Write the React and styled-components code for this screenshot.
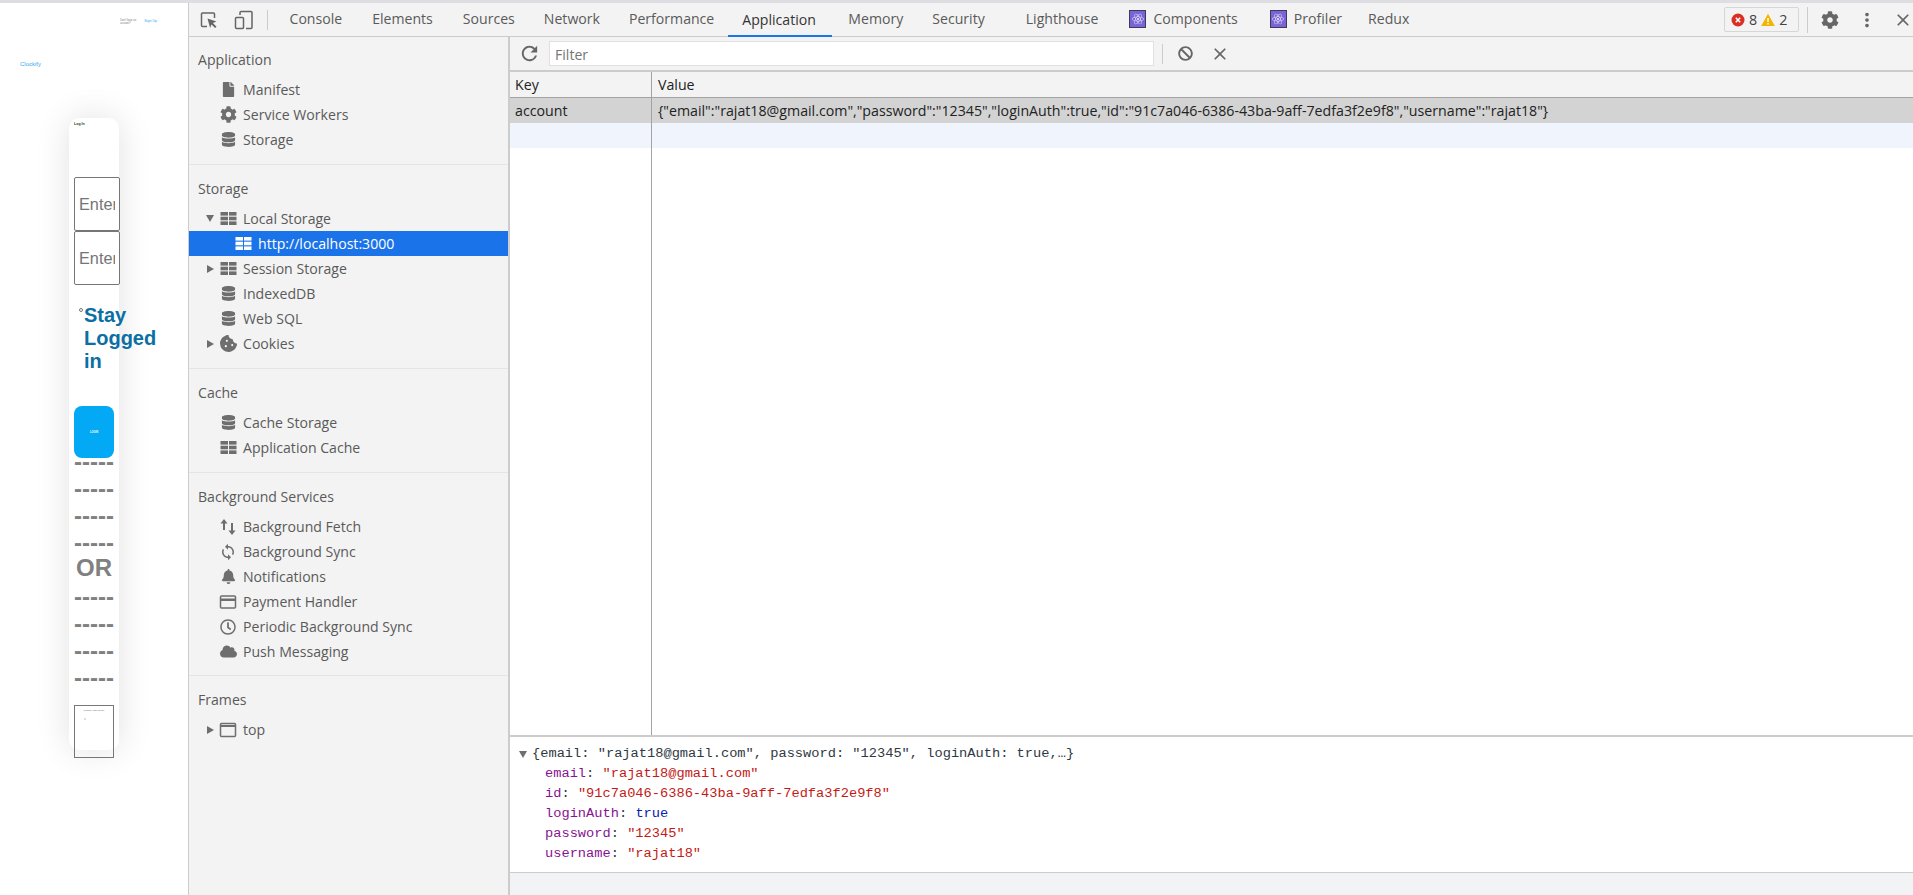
import React from "react";
import styled, { createGlobalStyle } from "styled-components";
import { FaFile, FaCog, FaDatabase, FaCookieBite, FaBell, FaCloud, FaRegClock, FaReact, FaBan } from "react-icons/fa";
import { MdSync, MdRefresh, MdClose, MdMoreVert } from "react-icons/md";

const GlobalStyle = createGlobalStyle`
  * { box-sizing: border-box; }
  html, body { margin: 0; padding: 0; background: #fff; overflow: hidden; }
  body { font-family: "Open Sans", "Noto Sans", sans-serif; }
`;

const Root = styled.div`
  width: 1913px;
  height: 895px;
  display: flex;
  flex-direction: column;
  border-top: 3px solid #dedee2;
`;
const Body = styled.div`
  flex: 1;
  display: flex;
  min-height: 0;
`;

/* the squeezed page on the left */
const PagePane = styled.div`
  width: 189px;
  flex-shrink: 0;
  border-right: 1px solid #ccc;
  background: #fff;
  font-family: "Liberation Sans", Arial, sans-serif;
`;
const PageHeader = styled.div`
  display: flex;
  justify-content: flex-end;
  align-items: flex-start;
  gap: 7px;
  padding: 16px 31px 0 0;
  height: 55px;
`;
const Tiny = styled.span`
  width: 17px;
  font-size: 2.6px;
  line-height: 3px;
  color: #777;
`;
const SignUp = styled.a`
  font-size: 3.6px;
  line-height: 5px;
  color: #3aa9f0;
`;
const Brand = styled.div`
  height: 60px;
  padding: 2px 0 0 20px;
  font-size: 6px;
  line-height: 8px;
  color: #3aa9f0;
`;
const Card = styled.div`
  width: 50px;
  height: 632px;
  margin-left: 69px;
  padding: 4px 5px;
  border-radius: 10px;
  background: #fff;
  box-shadow: 0 0 34px rgba(0, 0, 0, 0.12);
`;
const CardTitle = styled.div`
  height: 55px;
  font-size: 3.6px;
  line-height: 5px;
  font-weight: 700;
  color: #333;
`;
const FieldInput = styled.input`
  display: block;
  width: 46px;
  height: 54px;
  padding: 0 4px;
  border: 1px solid #767676;
  border-radius: 2px;
  outline: none;
  background: #fff;
  font-family: "Liberation Sans", Arial, sans-serif;
  font-size: 16.3px;
  color: #757575;
  &::placeholder { color: #757575; opacity: 1; }
`;
const StayRow = styled.label`
  display: flex;
  align-items: flex-start;
  height: 121px;
  padding: 19px 0 0 5px;
`;
const Radio = styled.span`
  width: 4px;
  height: 4px;
  margin-top: 4px;
  flex-shrink: 0;
  border: 1px solid #767676;
  border-radius: 50%;
`;
const StayText = styled.span`
  width: 62px;
  flex-shrink: 0;
  margin-left: 1px;
  font-size: 20px;
  line-height: 23px;
  font-weight: 700;
  color: #0b6fa4;
`;
const LoginButton = styled.button`
  display: block;
  width: 40px;
  height: 52px;
  padding: 0;
  border: none;
  border-radius: 8px;
  background: #03a9f4;
  color: #fff;
  font-family: "Liberation Sans", Arial, sans-serif;
  font-size: 2.6px;
  font-weight: 700;
`;
const Divider = styled.div`
  width: 40px;
  margin-top: -10px;
  font-size: 24px;
  line-height: 27px;
  font-weight: 700;
  color: #808080;
  text-align: center;
`;
const DividerLine = styled.div`
  white-space: nowrap;
`;
const OrLine = styled(DividerLine)`
  margin: -2px 0 2px;
`;
const SocialBox = styled.div`
  width: 40px;
  height: 53px;
  margin-top: 14px;
  padding-top: 3px;
  border: 1px solid #777;
  font-size: 2.2px;
  line-height: 2.4px;
  color: #666;
  text-align: center;
`;
const TinyCheck = styled.div`
  width: 2px;
  height: 2px;
  margin: 7px 0 0 9px;
  background: #ddd;
`;

/* devtools */
const DevTools = styled.div`
  flex: 1;
  min-width: 0;
  display: flex;
  flex-direction: column;
  background: #f3f3f3;
  color: #333;
`;
const TopBar = styled.div`
  height: 34px;
  flex-shrink: 0;
  display: flex;
  align-items: center;
  border-bottom: 1px solid #ccc;
  background: #f3f3f3;
`;
const ToolButton = styled.span`
  width: ${(p) => p.$w || 36}px;
  display: flex;
  align-items: center;
  justify-content: center;
  color: #666;
`;
const BarSeparator = styled.span`
  width: 1px;
  height: ${(p) => p.$h || 20}px;
  margin: ${(p) => p.$m || "0 7px"};
  background: #ccc;
`;
const Tab = styled.div`
  margin-left: ${(p) => p.$gap || 0}px;
  padding: 0 ${(p) => (p.$active ? 16 : 14.5)}px 0 14.5px;
  display: flex;
  align-items: center;
  gap: 7px;
  font-size: 14.1px;
  color: ${(p) => (p.$active ? "#333" : "#5a5a5a")};
  border-bottom: 2px solid ${(p) => (p.$active ? "#1a73e8" : "transparent")};
  margin-bottom: ${(p) => (p.$active ? "-1px" : "0")};
  height: ${(p) => (p.$active ? "34px" : "33px")};
`;
const ReactBadge = styled.span`
  width: 17px;
  height: 18px;
  display: flex;
  align-items: center;
  justify-content: center;
  background: #7a63d6;
  border: 1px solid #3c3c55;
  color: #e6e1ff;
  font-size: 12px;
`;
const TopRight = styled.div`
  margin-left: auto;
  display: flex;
  align-items: center;
`;
const IssueBadge = styled.div`
  width: 75px;
  height: 25px;
  padding: 0 6px;
  display: flex;
  align-items: center;
  gap: 4px;
  border: 1px solid #d6d6d6;
  border-radius: 2px;
  font-size: 14.3px;
  color: #444;
`;
const Panels = styled.div`
  flex: 1;
  min-height: 0;
  display: flex;
`;
const Sidebar = styled.div`
  width: 321px;
  flex-shrink: 0;
  border-right: 2px solid #ccc;
  background: #f3f3f3;
`;
const Section = styled.div`
  padding: 10px 0 12px;
  border-bottom: 1px solid #e4e4e4;
  &:first-child { padding-top: 9px; }
  &:nth-child(4) { padding-bottom: 11px; }
  &:last-child { border-bottom: none; }
`;
const SectionTitle = styled.div`
  height: 26px;
  margin-bottom: 5px;
  padding-left: 9px;
  display: flex;
  align-items: center;
  font-size: 14.1px;
  color: #5a5a5a;
`;
const TreeRow = styled.div`
  height: 25px;
  padding-left: ${(p) => (p.$nested ? 45 : 16)}px;
  display: flex;
  align-items: center;
  font-size: 14.1px;
  color: ${(p) => (p.$selected ? "#fff" : "#5a5a5a")};
  background: ${(p) => (p.$selected ? "#1a73e8" : "transparent")};
`;
const ArrowSlot = styled.span`
  width: 13px;
  flex-shrink: 0;
`;
const Arrow = styled.span`
  width: 10px;
  height: 10px;
  margin-right: ${(p) => p.$mr || 0}px;
  flex-shrink: 0;
  display: flex;
  align-items: center;
  justify-content: center;
  color: #6e6e6e;
  &::before {
    content: "";
    border-style: solid;
    border-color: transparent;
    ${(p) =>
      p.$open
        ? "border-width: 7px 4.5px 0; border-top-color: currentColor;"
        : "border-width: 4.5px 0 4.5px 7px; border-left-color: currentColor;"}
  }
`;
const IconSlot = styled.span`
  width: 18px;
  height: 18px;
  margin: 0 6px 0 ${(p) => (p.$nested ? 0 : 1)}px;
  flex-shrink: 0;
  display: flex;
  align-items: center;
  justify-content: center;
  color: ${(p) => (p.$selected ? "#fff" : "#6e6e6e")};
`;
const Main = styled.div`
  flex: 1;
  min-width: 0;
  display: flex;
  flex-direction: column;
  background: #fff;
`;
const FilterBar = styled.div`
  height: 35px;
  flex-shrink: 0;
  display: flex;
  align-items: center;
  padding-left: 8px;
  background: #f3f3f3;
  border-bottom: 2px solid #ccc;
`;
const FilterInput = styled.input`
  width: 605px;
  height: 25px;
  margin-left: 8px;
  padding: 1px 5px 0;
  border: 1px solid #e0e0e0;
  outline: none;
  background: #fff;
  font-family: "Open Sans", sans-serif;
  font-size: 14.1px;
  &::placeholder { color: #757575; opacity: 1; }
`;
const GridArea = styled.div`
  flex: 1;
  min-height: 0;
  display: grid;
  grid-template-columns: 142px 1fr;
  grid-template-rows: 26px 25px 25px 1fr;
`;
const Cell = styled.div`
  display: flex;
  align-items: center;
  padding-left: ${(p) => (p.$key ? 5 : 6)}px;
  font-size: 14.2px;
  white-space: nowrap;
  overflow: hidden;
  color: #222;
  background: ${(p) => p.$bg || "transparent"};
  border-right: ${(p) => (p.$key ? "1px solid #a3a3a3" : "none")};
  border-bottom: ${(p) => (p.$head ? "1px solid #a3a3a3" : "none")};
`;
const Preview = styled.div`
  height: 138px;
  flex-shrink: 0;
  padding: 7px 0 0 8px;
  border-top: 2px solid #ccc;
  border-bottom: 1px solid #ccc;
  background: #fff;
  font-family: "Liberation Mono", "DejaVu Sans Mono", monospace;
  font-size: 13.7px;
  line-height: 20px;
`;
const PreviewSummary = styled.div`
  display: flex;
  align-items: center;
  color: #303942;
  white-space: pre;
`;
const PreviewLine = styled.div`
  padding-left: 27px;
  white-space: pre;
  color: #303942;
`;
const PropName = styled.span`
  color: #881391;
`;
const PropValue = styled.span`
  color: ${(p) => (p.$bool ? "#0d22aa" : "#c41a16")};
`;
const Footer = styled.div`
  height: 22px;
  flex-shrink: 0;
  background: #f1f3f4;
`;

const TableIcon = ({ size = 17 }) => (
  <svg width={size} height={size} viewBox="0 0 17 17" fill="currentColor">
    <rect x="0.5" y="2" width="7.5" height="3.6" />
    <rect x="9" y="2" width="7.5" height="3.6" />
    <rect x="0.5" y="6.7" width="7.5" height="3.6" />
    <rect x="9" y="6.7" width="7.5" height="3.6" />
    <rect x="0.5" y="11.4" width="7.5" height="3.6" />
    <rect x="9" y="11.4" width="7.5" height="3.6" />
  </svg>
);
const InspectIcon = () => (
  <svg width="18" height="18" viewBox="0 0 18 18" fill="none">
    <path d="M7 15.5H2.5a1 1 0 0 1-1-1V3a1 1 0 0 1 1-1h11a1 1 0 0 1 1 1v4" stroke="#666" strokeWidth="1.5" />
    <path d="M7.5 7.5l9 3-3.6 1.6 3.6 3.6-1.4 1.4-3.6-3.6-1.4 3.4z" fill="#666" />
  </svg>
);
const DeviceIcon = () => (
  <svg width="20" height="20" viewBox="0 0 20 20" fill="none" stroke="#666" strokeWidth="1.5">
    <path d="M6 5V2.5a1 1 0 0 1 1-1h10a1 1 0 0 1 1 1v15a1 1 0 0 1-1 1h-5" />
    <rect x="1.5" y="7.5" width="8" height="11" rx="1" />
  </svg>
);
const FetchIcon = () => (
  <svg width="18" height="18" viewBox="0 0 18 18" fill="currentColor">
    <path d="M5 1L1.5 5.5H4V12h2V5.5h2.5z" />
    <path d="M12 5v7.5H9.5L13 17l3.5-4.5H14V5z" />
  </svg>
);
const CardIcon = () => (
  <svg width="18" height="18" viewBox="0 0 18 18" fill="none" stroke="currentColor" strokeWidth="1.5">
    <rect x="1.5" y="3" width="15" height="12" rx="1" />
    <rect x="1.5" y="5.5" width="15" height="2.5" fill="currentColor" stroke="none" />
  </svg>
);
const FrameIcon = () => (
  <svg width="18" height="18" viewBox="0 0 18 18" fill="none" stroke="currentColor" strokeWidth="1.5">
    <rect x="1.5" y="2.5" width="15" height="13" rx="1" />
    <path d="M1.5 5h15" strokeWidth="2" />
  </svg>
);
const ErrorIcon = () => (
  <svg width="14" height="14" viewBox="0 0 14 14">
    <circle cx="7" cy="7" r="6.5" fill="#d93025" />
    <path d="M4.8 4.8l4.4 4.4M9.2 4.8l-4.4 4.4" stroke="#fff" strokeWidth="1.5" />
  </svg>
);
const WarnIcon = () => (
  <svg width="14" height="14" viewBox="0 0 14 14">
    <path d="M7 .8L13.8 13H.2z" fill="#f4b400" />
    <path d="M7 5v4M7 10v1.6" stroke="#fff" strokeWidth="1.4" />
  </svg>
);

const db = <FaDatabase size={15} />;
const table = <TableIcon />;

const SECTIONS = [
  {
    title: "Application",
    rows: [
      { label: "Manifest", icon: <FaFile size={15} /> },
      { label: "Service Workers", icon: <FaCog size={17} /> },
      { label: "Storage", icon: db },
    ],
  },
  {
    title: "Storage",
    rows: [
      { label: "Local Storage", icon: table, arrow: "open" },
      { label: "http://localhost:3000", icon: table, nested: true, selected: true },
      { label: "Session Storage", icon: table, arrow: "closed" },
      { label: "IndexedDB", icon: db },
      { label: "Web SQL", icon: db },
      { label: "Cookies", icon: <FaCookieBite size={17} />, arrow: "closed" },
    ],
  },
  {
    title: "Cache",
    rows: [
      { label: "Cache Storage", icon: db },
      { label: "Application Cache", icon: table },
    ],
  },
  {
    title: "Background Services",
    rows: [
      { label: "Background Fetch", icon: <FetchIcon /> },
      { label: "Background Sync", icon: <MdSync size={18} /> },
      { label: "Notifications", icon: <FaBell size={15} /> },
      { label: "Payment Handler", icon: <CardIcon /> },
      { label: "Periodic Background Sync", icon: <FaRegClock size={16} /> },
      { label: "Push Messaging", icon: <FaCloud size={17} /> },
    ],
  },
  {
    title: "Frames",
    rows: [{ label: "top", icon: <FrameIcon />, arrow: "closed" }],
  },
];

// gap = extra space before a tab, the system font of the original runs a little differently
const TABS = [
  { name: "Console" },
  { name: "Elements", gap: 1 },
  { name: "Sources", gap: 1 },
  { name: "Network" },
  { name: "Performance" },
  { name: "Application", active: true, gap: -1 },
  { name: "Memory", gap: 2 },
  { name: "Security" },
  { name: "Lighthouse", gap: 12 },
  { name: "Components", react: true, gap: 2 },
  { name: "Profiler", react: true, gap: 3 },
  { name: "Redux", gap: -3 },
];

const JSON_VALUE =
  '{"email":"rajat18@gmail.com","password":"12345","loginAuth":true,"id":"91c7a046-6386-43ba-9aff-7edfa3f2e9f8","username":"rajat18"}';

const LoginPage = () => (
  <PagePane>
    <PageHeader>
      <Tiny>Don't have an account?</Tiny>
      <SignUp>Sign Up</SignUp>
    </PageHeader>
    <Brand>Clockify</Brand>
    <Card>
      <CardTitle>Log In</CardTitle>
      <FieldInput placeholder="Enter your email" />
      <FieldInput placeholder="Enter your password" />
      <StayRow>
        <Radio />
        <StayText>Stay Logged in</StayText>
      </StayRow>
      <LoginButton>LOGIN</LoginButton>
      <Divider>
        {["-----", "-----", "-----", "-----"].map((line, i) => (
          <DividerLine key={i}>{line}</DividerLine>
        ))}
        <OrLine>OR</OrLine>
        {["-----", "-----", "-----", "-----"].map((line, i) => (
          <DividerLine key={i}>{line}</DividerLine>
        ))}
      </Divider>
      <SocialBox>
        Continue with Google
        <TinyCheck />
      </SocialBox>
    </Card>
  </PagePane>
);

const Toolbar = () => (
  <TopBar>
    <ToolButton $w={40}>
      <InspectIcon />
    </ToolButton>
    <ToolButton $w={30}>
      <DeviceIcon />
    </ToolButton>
    <BarSeparator $h={20} $m="0 7px 0 8px" />
    {TABS.map((tab) => (
      <Tab key={tab.name} $active={tab.active} $gap={tab.gap}>
        {tab.react && (
          <ReactBadge>
            <FaReact />
          </ReactBadge>
        )}
        {tab.name}
      </Tab>
    ))}
    <TopRight>
      <IssueBadge>
        <ErrorIcon />8<WarnIcon />2
      </IssueBadge>
      <BarSeparator $h={26} $m="0 11px 0 8px" />
      <ToolButton $w={22}>
        <FaCog size={18} />
      </ToolButton>
      <ToolButton $w={52}>
        <MdMoreVert size={22} />
      </ToolButton>
      <ToolButton $w={20}>
        <MdClose size={20} />
      </ToolButton>
    </TopRight>
  </TopBar>
);

const StorageSidebar = () => (
  <Sidebar>
    {SECTIONS.map((section) => (
      <Section key={section.title}>
        <SectionTitle>{section.title}</SectionTitle>
        {section.rows.map((row) => (
          <TreeRow key={row.label} $nested={row.nested} $selected={row.selected}>
            {!row.nested &&
              (row.arrow ? <Arrow $open={row.arrow === "open"} $mr={3} /> : <ArrowSlot />)}
            <IconSlot $nested={row.nested} $selected={row.selected}>
              {row.icon}
            </IconSlot>
            {row.label}
          </TreeRow>
        ))}
      </Section>
    ))}
  </Sidebar>
);

const StoragePanel = () => (
  <Main>
    <FilterBar>
      <MdRefresh size={23} color="#666" />
      <FilterInput placeholder="Filter" />
      <BarSeparator $h={20} $m="0 15px 0 8px" />
      <FaBan size={15} color="#666" />
      <ToolButton $w={54}>
        <MdClose size={20} />
      </ToolButton>
    </FilterBar>
    <GridArea>
      <Cell $key $head $bg="#f3f3f3">Key</Cell>
      <Cell $head $bg="#f3f3f3">Value</Cell>
      <Cell $key $bg="#d3d3d3">account</Cell>
      <Cell $bg="#d3d3d3">{JSON_VALUE}</Cell>
      <Cell $key $bg="#f0f5fd" />
      <Cell $bg="#f0f5fd" />
      <Cell $key />
      <Cell />
    </GridArea>
    <Preview>
      <PreviewSummary>
        <Arrow $open $mr={4} />
        {'{email: "rajat18@gmail.com", password: "12345", loginAuth: true,…}'}
      </PreviewSummary>
      <PreviewLine>
        <PropName>email</PropName>: <PropValue>"rajat18@gmail.com"</PropValue>
      </PreviewLine>
      <PreviewLine>
        <PropName>id</PropName>: <PropValue>"91c7a046-6386-43ba-9aff-7edfa3f2e9f8"</PropValue>
      </PreviewLine>
      <PreviewLine>
        <PropName>loginAuth</PropName>: <PropValue $bool>true</PropValue>
      </PreviewLine>
      <PreviewLine>
        <PropName>password</PropName>: <PropValue>"12345"</PropValue>
      </PreviewLine>
      <PreviewLine>
        <PropName>username</PropName>: <PropValue>"rajat18"</PropValue>
      </PreviewLine>
    </Preview>
    <Footer />
  </Main>
);

export default function App() {
  return (
    <Root>
      <GlobalStyle />
      <Body>
        <LoginPage />
        <DevTools>
          <Toolbar />
          <Panels>
            <StorageSidebar />
            <StoragePanel />
          </Panels>
        </DevTools>
      </Body>
    </Root>
  );
}
